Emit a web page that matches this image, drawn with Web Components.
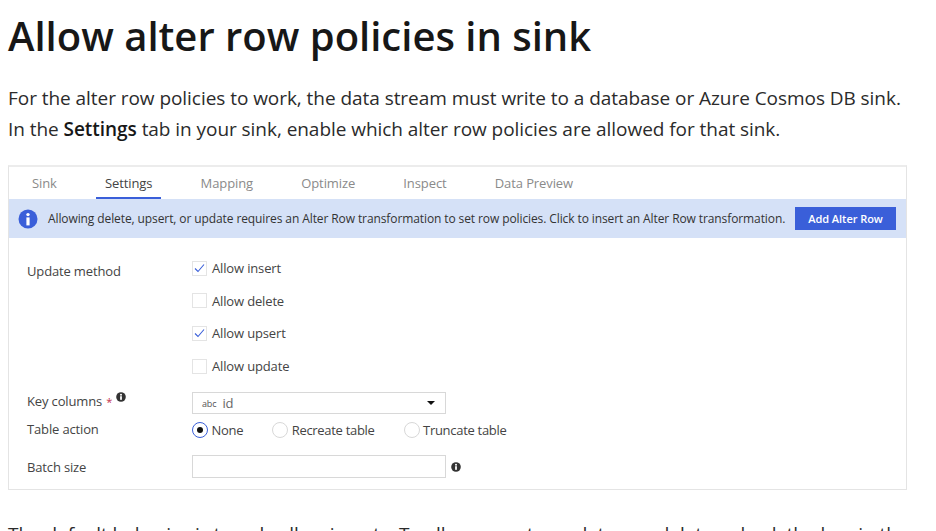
<!DOCTYPE html>
<html>
<head>
<meta charset="utf-8">
<title>Allow alter row policies in sink</title>
<style>
html, body { margin: 0; padding: 0; height: 531px; overflow: hidden; background: #fff; }
body { font-family: "Open Sans", "Noto Sans", sans-serif; color: #171717; }
</style>
</head>
<body>
<doc-page>
 <span slot="title">Allow alter row policies in sink</span>
 <sink-panel></sink-panel>
</doc-page>
<script>
"use strict"

class DocPage extends HTMLElement {
 constructor() {
  super();
  this.attachShadow({ mode: 'open' }).innerHTML = `
   <style>
    :host { display: block; padding: 0 8px; width: 899px; }
    h1 { margin: 0; padding-top: 9px; font-size: 40px; line-height: 54px; font-weight: 600; letter-spacing: 0; color: #171717; }
    p { margin: 0; font-size: 19px; line-height: 31px; letter-spacing: -.05px; color: #2b2b2b; white-space: nowrap; }
    p b { font-weight: 600; color: #171717; }
    .intro { margin-top: 20px; }
    .panel { margin-top: 20px; }
    .after { margin-top: 29px; }
   </style>
   <h1><slot name="title"></slot></h1>
   <p class="intro">For the alter row policies to work, the data stream must write to a database or Azure Cosmos DB sink.</p>
   <p>In the <b>Settings</b> tab in your sink, enable which alter row policies are allowed for that sink.</p>
   <div class="panel"><slot></slot></div>
   <p class="after">The default behavior is to only allow inserts. To allow upserts, updates, or deletes, check the box in the</p>
  `;
 }
}

class SinkTabs extends HTMLElement {
 constructor() {
  super();
  const names = ['Sink', 'Settings', 'Mapping', 'Optimize', 'Inspect', 'Data Preview'];
  const links = names.map(n => `<a class="${n == 'Settings' ? 'on' : ''}">${n}</a>`).join('');
  this.attachShadow({ mode: 'open' }).innerHTML = `
   <style>
    :host { display: flex; height: 32px; padding-left: 23px; gap: 48.2px; font-size: 13px; letter-spacing: -.1px; color: #8a8a8a; }
    a { display: block; line-height: 32px; height: 32px; box-sizing: border-box; position: relative; }
    a.on { color: #444; }
    a.on::after { content: ""; position: absolute; left: -9px; right: -9px; bottom: 0; height: 2px; background: #3a5fd9; }
   </style>
   ${links}
  `;
 }
}

class InfoBanner extends HTMLElement {
 constructor() {
  super();
  this.attachShadow({ mode: 'open' }).innerHTML = `
   <style>
    :host { display: flex; align-items: center; height: 39px; padding: 0 10px 0 9px; background: #d5e1f7; font-size: 12px; letter-spacing: -.1px; color: #333; white-space: nowrap; }
    svg { width: 20px; height: 20px; margin-right: 10px; flex: none; }
    span { flex: 1; }
    button { width: 101px; height: 23px; padding: 0; border: 0; background: #3a5fd9; color: #fff; font: 600 11px "Open Sans", sans-serif; letter-spacing: -.05px; }
   </style>
   <svg viewBox="0 0 20 20"><circle cx="10" cy="10" r="9.5" fill="#3a5fd9"/><circle cx="10" cy="5.6" r="1.7" fill="#fff"/><rect x="8.4" y="8.4" width="3.2" height="8" fill="#fff"/></svg>
   <span><slot></slot></span>
   <button>Add Alter Row</button>
  `;
 }
}

class SinkCheck extends HTMLElement {
 constructor() {
  super();
  const mark = this.hasAttribute('checked') ? '<svg viewBox="0 0 13 13"><path d="M2 6.5 L5 9.5 L11 2.5" fill="none" stroke="#3a5fd9" stroke-width="1.1"/></svg>' : '';
  this.attachShadow({ mode: 'open' }).innerHTML = `
   <style>
    :host { display: flex; align-items: center; height: 20px; }
    i { display: block; box-sizing: border-box; width: 15px; height: 15px; border: 1px solid #e4e4e4; margin-right: 5px; }
    svg { display: block; width: 13px; height: 13px; }
   </style>
   <i>${mark}</i><slot></slot>
  `;
 }
}

class SinkRadio extends HTMLElement {
 constructor() {
  super();
  const on = this.hasAttribute('checked');
  this.attachShadow({ mode: 'open' }).innerHTML = `
   <style>
    :host { display: flex; align-items: center; letter-spacing: -.3px; }
    i { display: flex; align-items: center; justify-content: center; box-sizing: border-box; width: 16px; height: 16px; border-radius: 50%; border: 1px solid ${on ? '#3a5fd9' : '#d8d8d8'}; margin-right: 3.5px; }
    b { display: ${on ? 'block' : 'none'}; width: 6px; height: 6px; border-radius: 50%; background: #111; }
   </style>
   <i><b></b></i><slot></slot>
  `;
 }
}

class HelpDot extends HTMLElement {
 constructor() {
  super();
  this.attachShadow({ mode: 'open' }).innerHTML = `
   <style>
    :host { display: inline-block; width: 10px; height: 10px; line-height: 0; }
    svg { width: 10px; height: 10px; }
   </style>
   <svg viewBox="0 0 10 10"><circle cx="5" cy="5" r="4.8" fill="#333"/><circle cx="5" cy="2.7" r="1" fill="#fff"/><rect x="4.1" y="4.2" width="1.8" height="3.6" fill="#fff"/></svg>
  `;
 }
}

class SinkPanel extends HTMLElement {
 constructor() {
  super();
  this.attachShadow({ mode: 'open' }).innerHTML = `
   <style>
    :host { display: block; box-sizing: border-box; width: 899px; height: 325px; border: 1px solid #e4e4e4; border-top: 2px solid #ececec; font-size: 13px; letter-spacing: -.15px; color: #444; }
    .form { display: grid; grid-template-columns: 165px 1fr; padding: 14px 0 0 18px; }
    .label { line-height: 18px; }
    .checks { display: grid; grid-auto-rows: 32.6px; align-items: center; }
    .update { padding-top: 10px; }
    .key { align-self: start; padding-top: 1px; margin-top: 9px; }
    .key em { color: #c4314b; font-style: normal; font-size: 11px; margin: 0 1px; }
    .key help-dot { position: relative; top: -4px; }
    .field { box-sizing: border-box; width: 254px; height: 23px; border: 1px solid #d8d8d8; }
    .select { display: flex; align-items: center; height: 22px; padding: 0 10px 0 9px; margin-top: 10px; }
    .select small { font-size: 9px; margin-right: 6px; color: #555; }
    .select span { flex: 1; color: #666; }
    .caret { width: 0; height: 0; border: 4px solid transparent; border-top-color: #111; border-bottom-width: 0; }
    .radios { display: flex; gap: 29px; height: 27px; align-items: center; margin-top: 2px; }
    .batch { display: flex; align-items: center; gap: 5px; margin-top: 12px; }
    .tl { margin-top: 6px; }
    .bl { margin-top: 15px; }
   </style>
   <sink-tabs></sink-tabs>
   <info-banner>Allowing delete, upsert, or update requires an Alter Row transformation to set row policies. Click to insert an Alter Row transformation.</info-banner>
   <div class="form">
    <div class="label update">Update method</div>
    <div class="checks">
     <sink-check checked>Allow insert</sink-check>
     <sink-check>Allow delete</sink-check>
     <sink-check checked>Allow upsert</sink-check>
     <sink-check>Allow update</sink-check>
    </div>
    <div class="label key">Key columns <em>*</em> <help-dot></help-dot></div>
    <div class="field select"><small>abc</small><span>id</span><i class="caret"></i></div>
    <div class="label tl">Table action</div>
    <div class="radios">
     <sink-radio checked>None</sink-radio>
     <sink-radio>Recreate table</sink-radio>
     <sink-radio>Truncate table</sink-radio>
    </div>
    <div class="label bl">Batch size</div>
    <div class="batch"><div class="field"></div><help-dot></help-dot></div>
   </div>
  `;
 }
}

customElements.define('doc-page', DocPage);
customElements.define('sink-tabs', SinkTabs);
customElements.define('info-banner', InfoBanner);
customElements.define('sink-check', SinkCheck);
customElements.define('sink-radio', SinkRadio);
customElements.define('help-dot', HelpDot);
customElements.define('sink-panel', SinkPanel);
</script>
</body>
</html>
